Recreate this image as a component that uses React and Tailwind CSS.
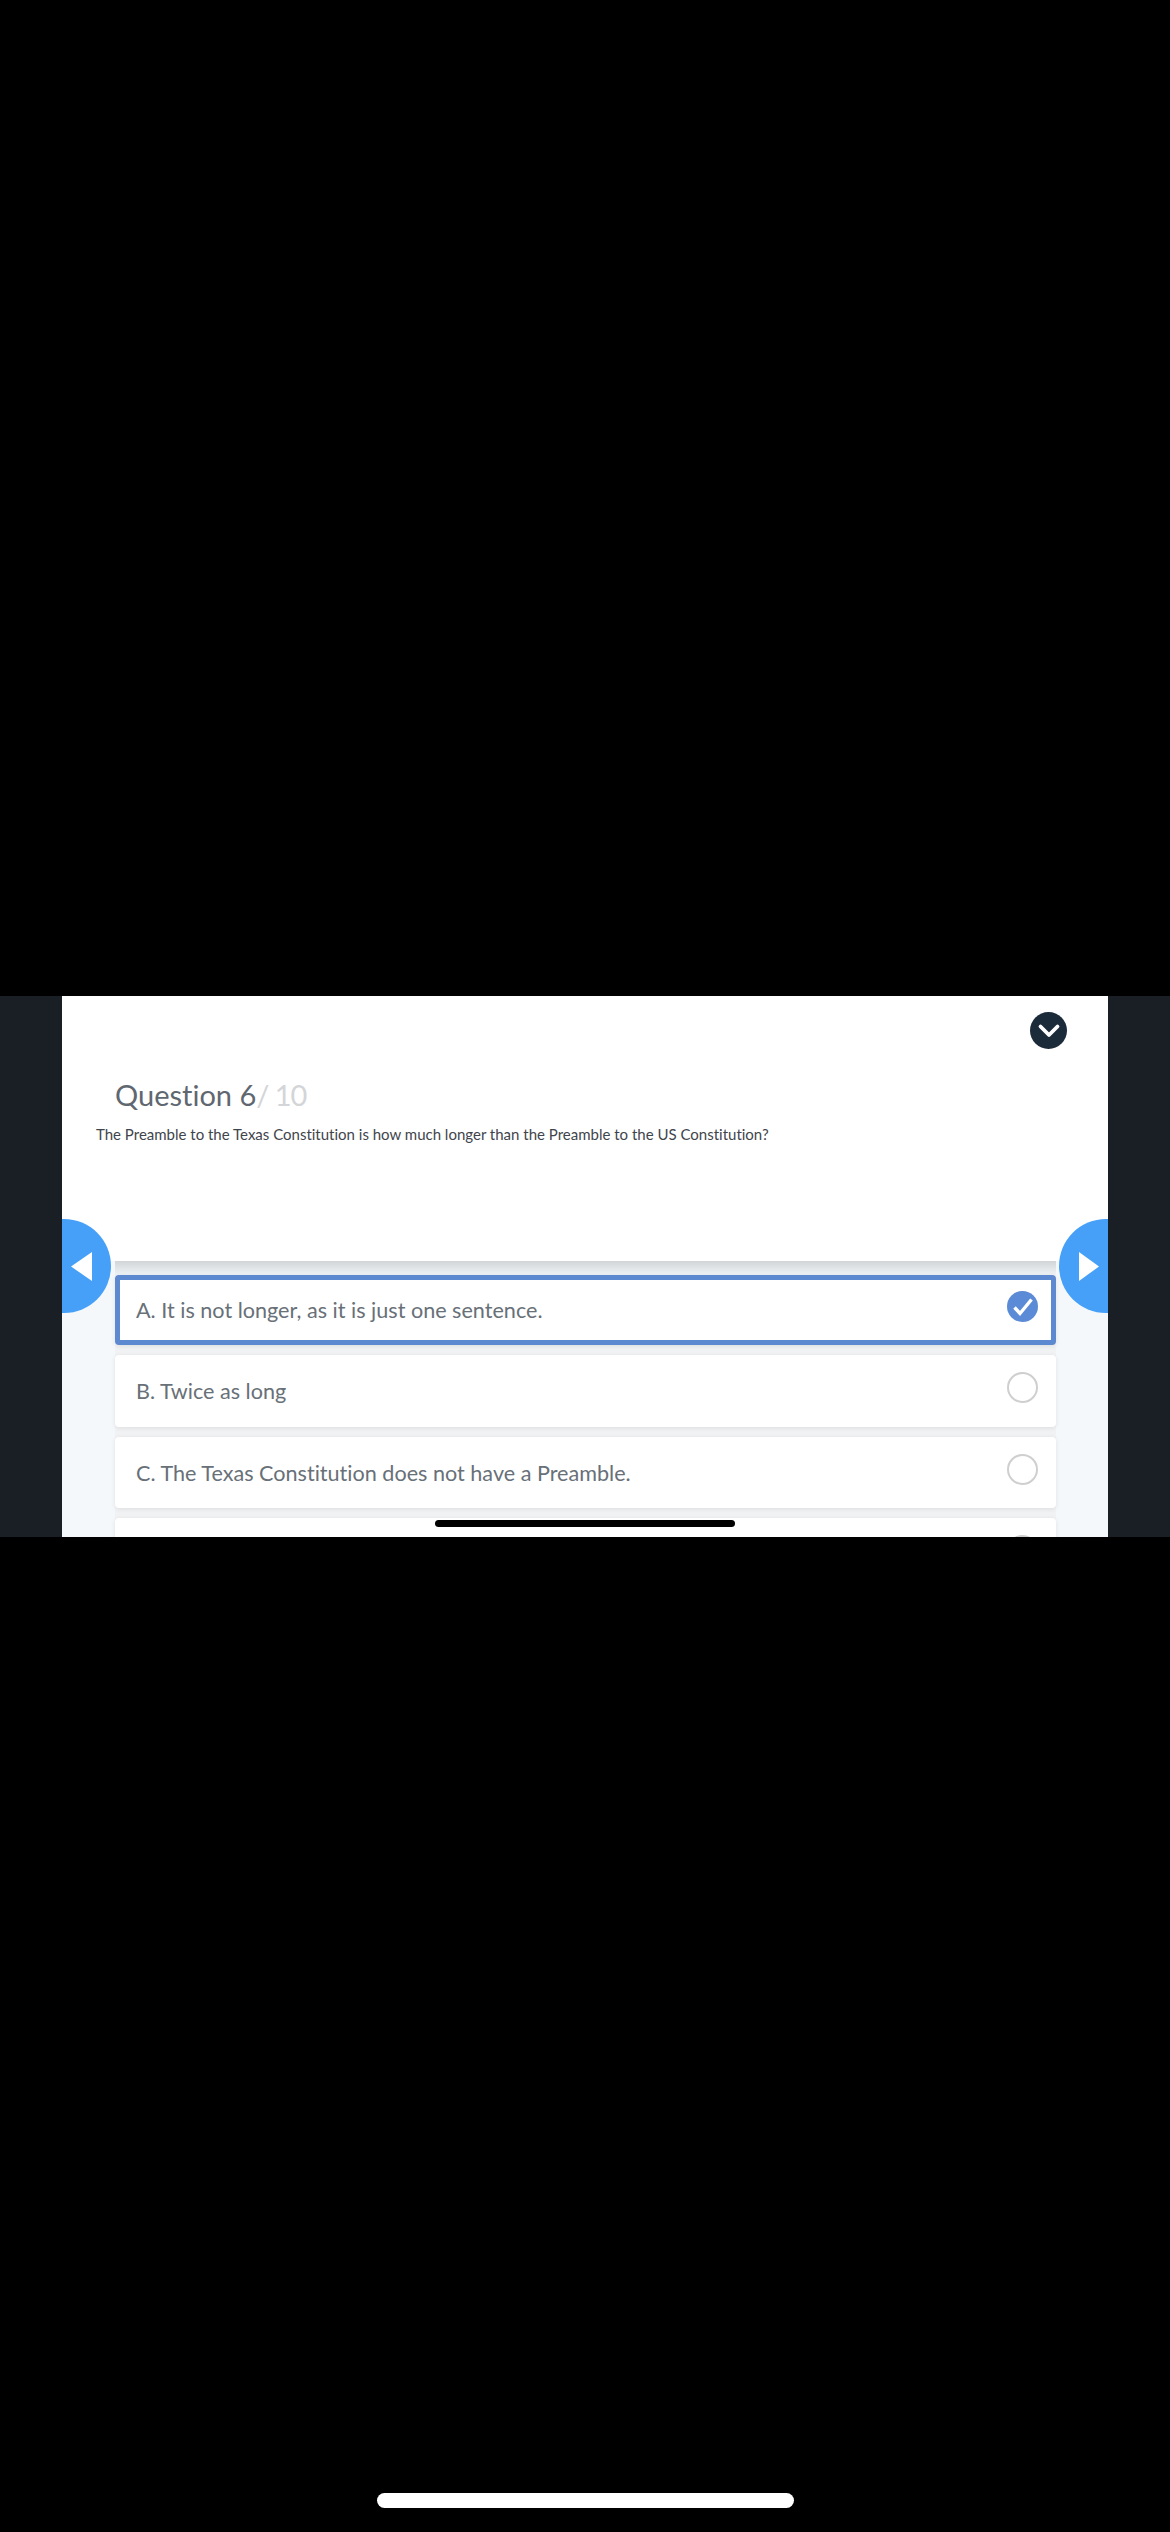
import React from "react";

const font = "font-['Lato','Noto_Sans',sans-serif] [font-variant-ligatures:none]";

function Radio({ checked }) {
  if (checked) {
    return (
      <svg width="31" height="31" viewBox="0 0 31 31" className="shrink-0">
        <circle cx="15.5" cy="15.5" r="15.5" fill="#5b8bd6" />
        <path d="M7.5 16.5 L13 22.5 L24.5 8.5" fill="none" stroke="#fff" strokeWidth="3.4" />
      </svg>
    );
  }
  return <div className="w-[31px] h-[31px] rounded-full border-[2px] border-[#cfcfcf] bg-white shrink-0" />;
}

function Option({ label, checked, h }) {
  return (
    <div
      className={`shrink-0 flex items-start justify-between bg-white rounded-[4px] shadow-[0_1px_5px_rgba(0,0,0,0.09)] ${
        checked ? "border-[5px] border-[#5c89cf] pl-[16px] pr-[13px] pt-[11px]" : "pl-[21px] pr-[18px] pt-[17px]"
      }`}
      style={{ height: h }}
    >
      <span className={`text-[21.6px] leading-[30px] text-[#687078] ${checked ? "mt-[4px]" : "mt-[4px]"}`}>{label}</span>
      <Radio checked={checked} />
    </div>
  );
}

export default function App() {
  return (
    <div className={`w-[1170px] h-[2532px] bg-black flex flex-col relative ${font}`}>
      <div className="h-[996px] shrink-0" />
      <div className="h-[541px] shrink-0 flex bg-[#1a1f26]">
        <div className="w-[62px] shrink-0" />
        <div className="w-[1046px] shrink-0 relative overflow-hidden flex flex-col bg-white">
          <div className="h-[265px] shrink-0 flex flex-col">
            <div className="flex justify-end pt-[16px] pr-[41px]">
              <div className="w-[37px] h-[37px] rounded-full bg-[#1c2b3a] flex items-center justify-center">
                <svg width="24" height="16" viewBox="0 0 24 16">
                  <path d="M3.5 3.5 L12 12 L20.5 3.5" fill="none" stroke="#fff" strokeWidth="3.8" strokeLinecap="round" strokeLinejoin="round" />
                </svg>
              </div>
            </div>
            <div className="ml-[53px] mt-[26px] text-[29px] leading-[40px] text-[#5f6770]">
              Question 6<span className="text-[#d3d5d8] tracking-[-1px]">/ 10</span>
            </div>
            <div className="ml-[34px] mt-[9px] text-[15px] leading-[20px] text-[#3f454c] whitespace-nowrap">
              The Preamble to the Texas Constitution is how much longer than the Preamble to the US Constitution?
            </div>
          </div>
          <div className="flex-1 min-h-0 bg-[#f5f8fb] pl-[53px] pr-[52px] flex flex-col overflow-hidden">
            <div className="h-[14px] shrink-0 bg-linear-to-b from-[#d2d5d7] to-[#f1f4f6]" />
            <div className="flex flex-col gap-[10px] bg-[#f0f2f4]">
              <Option label="A. It is not longer, as it is just one sentence." checked h={70} />
              <Option label="B. Twice as long" h={72} />
              <Option label="C. The Texas Constitution does not have a Preamble." h={71} />
              <Option label="" h={72} />
            </div>
          </div>
          {/* side navigation buttons */}
          <div className="absolute left-[-47px] top-[223px] w-[96px] h-[94px] rounded-full bg-[#46a0f8]" />
          <svg className="absolute left-[9px] top-[256px]" width="21" height="29" viewBox="0 0 21 29">
            <path d="M0 14.5 L21 0 L21 29 Z" fill="#fff" />
          </svg>
          <div className="absolute left-[997px] top-[223px] w-[98px] h-[94px] rounded-full bg-[#46a0f8]" />
          <svg className="absolute left-[1017px] top-[256px]" width="20" height="29" viewBox="0 0 20 29">
            <path d="M0 0 L20 14.5 L0 29 Z" fill="#fff" />
          </svg>
          {/* home indicator */}
          <div className="absolute left-[373px] top-[524px] w-[300px] h-[7px] rounded-full bg-black" />
        </div>
        <div className="flex-1" />
      </div>
      <div className="flex justify-center pt-[956px]">
        <div className="w-[417px] h-[15px] rounded-full bg-white" />
      </div>
    </div>
  );
}
